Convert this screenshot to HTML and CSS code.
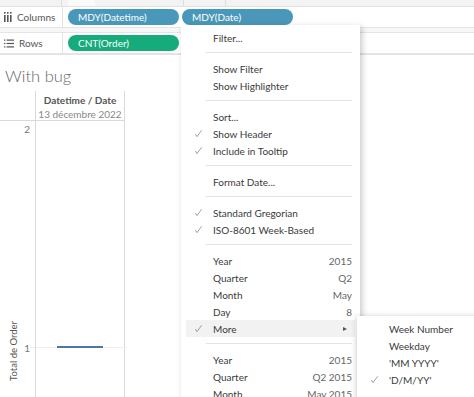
FILE: index.html
```html
<!DOCTYPE html>
<html lang="fr">
<head>
    <meta charset="UTF-8">
    <title>With bug</title>
    <link rel="stylesheet" href="styles.css">
</head>
<body>

    <div class="top-strip">
        <div class="strip-cell strip-a"></div>
        <div class="strip-cell strip-b"><span class="strip-box"></span></div>
        <div class="strip-cell strip-c"></div>
    </div>

    <div class="shelf shelf-cols">
        <div class="shelf-label">
            <svg class="shelf-icon" width="8" height="10" viewBox="0 0 8 10">
                <rect x="0" y="0" width="1.6" height="1.6" fill="#555"/>
                <rect x="3" y="0" width="1.6" height="1.6" fill="#555"/>
                <rect x="6" y="0" width="1.6" height="1.6" fill="#555"/>
                <rect x="0" y="3" width="1.6" height="7" fill="#555"/>
                <rect x="3" y="3" width="1.6" height="7" fill="#555"/>
                <rect x="6" y="3" width="1.6" height="7" fill="#555"/>
            </svg>
            Columns
        </div>
        <div class="shelf-pills">
            <span class="pill pill-dim">MDY(Datetime)</span>
            <span class="pill pill-dim">MDY(Date)</span>
        </div>
    </div>
    <div class="shelf-gap"></div>
    <div class="shelf shelf-rows">
        <div class="shelf-label">
            <svg class="shelf-icon" width="10" height="9" viewBox="0 0 10 9">
                <rect x="0" y="0.5" width="1.4" height="1.2" fill="#555"/>
                <rect x="2.6" y="0.5" width="7.4" height="1.2" fill="#555"/>
                <rect x="0" y="3.9" width="1.4" height="1.2" fill="#555"/>
                <rect x="2.6" y="3.9" width="7.4" height="1.2" fill="#555"/>
                <rect x="0" y="7.3" width="1.4" height="1.2" fill="#555"/>
                <rect x="2.6" y="7.3" width="7.4" height="1.2" fill="#555"/>
            </svg>
            Rows
        </div>
        <div class="shelf-pills">
            <span class="pill pill-measure">CNT(Order)</span>
        </div>
    </div>

    <div class="viz">
        <div class="viz-title">With bug</div>
        <div class="viz-table">
            <div class="corner"></div>
            <div class="col-header">
                <div class="hdr-title">Datetime / Date</div>
                <div class="hdr-value">13 décembre 2022</div>
            </div>
            <div class="axis">
                <span class="tick tick-2">2</span>
                <span class="tick tick-1">1</span>
                <span class="axis-title">Total de Order</span>
            </div>
            <div class="pane">
                <div class="gridline"></div>
                <div class="mark-line"></div>
            </div>
        </div>
    </div>

    <!-- menu contextuel du pill MDY(Date) -->
    <div class="menu">
        <div class="menu-item">Filter...</div>
        <div class="menu-sep"></div>
        <div class="menu-item">Show Filter</div>
        <div class="menu-item">Show Highlighter</div>
        <div class="menu-sep"></div>
        <div class="menu-item">Sort...</div>
        <div class="menu-item checked">Show Header</div>
        <div class="menu-item checked">Include in Tooltip</div>
        <div class="menu-sep"></div>
        <div class="menu-item">Format Date...</div>
        <div class="menu-sep"></div>
        <div class="menu-item checked">Standard Gregorian</div>
        <div class="menu-item checked">ISO-8601 Week-Based</div>
        <div class="menu-sep"></div>
        <div class="menu-item">Year<span class="menu-value">2015</span></div>
        <div class="menu-item">Quarter<span class="menu-value">Q2</span></div>
        <div class="menu-item">Month<span class="menu-value">May</span></div>
        <div class="menu-item">Day<span class="menu-value">8</span></div>
        <div class="menu-item checked active">More<span class="menu-arrow"></span></div>
        <div class="menu-sep"></div>
        <div class="menu-item">Year<span class="menu-value">2015</span></div>
        <div class="menu-item">Quarter<span class="menu-value">Q2 2015</span></div>
        <div class="menu-item">Month<span class="menu-value">May 2015</span></div>
    </div>

    <div class="submenu">
        <div class="menu-item">Week Number</div>
        <div class="menu-item">Weekday</div>
        <div class="menu-item">'MM YYYY'</div>
        <div class="menu-item checked">'D/M/YY'</div>
    </div>

</body>
</html>
```

FILE: styles.css
```css
body {
    margin: 0;
    width: 474px;
    height: 397px;
    overflow: hidden;
    position: relative;
    background: white;
    font-family: Lato, "Open Sans", sans-serif;
    color: #333;
}

/* bande du haut */
.top-strip {
    display: flex;
    height: 6px;
    background: #f3f3f3;
    border-bottom: 1px solid #e2e2e2;
}

.strip-cell {
    border-right: 1px solid #dedede;
}

.strip-a { width: 61px; }
.strip-b { width: 115px; padding-left: 6px; }
.strip-c { width: 41px; }

.strip-box {
    display: block;
    width: 27px;
    height: 6px;
    background: #fafafa;
}

/* shelves */
.shelf {
    display: flex;
    height: 20px;
}

.shelf-cols {
    border-bottom: 1px solid #e4e4e4;
}

.shelf-gap {
    height: 4px;
    background: #f7f7f7;
    border-bottom: 1px solid #e4e4e4;
}

.shelf-rows {
    height: 20px;
    border-bottom: 2px solid #e4e4e4;
}

.shelf-label {
    width: 58px;
    padding-left: 4px;
    border-right: 1px solid #e2e2e2;
    display: flex;
    align-items: center;
    gap: 5px;
    font-size: 10px;
    color: #555;
}

.shelf-icon {
    flex-shrink: 0;
}

.shelf-pills {
    display: flex;
    align-items: center;
    gap: 3px;
    padding-left: 5px;
}

.pill {
    width: 101px;
    height: 16px;
    line-height: 16px;
    padding-left: 10px;
    border-radius: 8px;
    color: white;
    font-size: 10px;
}

.pill-dim { background: #4a98b9; }
.pill-measure { background: #15ab7b; }

/* vue */
.viz {
    padding-top: 10px;
}

.viz-title {
    font-size: 16.5px;
    font-weight: 300;
    color: #666;
    line-height: 22px;
    padding-left: 5px;
}

.viz-table {
    display: grid;
    grid-template-columns: 36px 89px;
    grid-template-rows: 30px 276px;
    margin-top: 4px;
}

.corner {
    border-right: 1px solid #d9d9d9;
    border-bottom: 1px solid #d9d9d9;
}

.col-header {
    border-right: 1px solid #d9d9d9;
    border-bottom: 1px solid #d9d9d9;
    text-align: center;
    padding-top: 2px;
}

.hdr-title {
    font-size: 10px;
    font-weight: bold;
    color: #555;
    line-height: 14px;
}

.hdr-value {
    font-size: 10px;
    color: #888;
    line-height: 14px;
}

.axis {
    position: relative;
    border-right: 1px solid #d9d9d9;
}

.tick {
    position: absolute;
    right: 5px;
    font-size: 10px;
    color: #777;
    line-height: 12px;
}

.tick-2 { top: 2px; }
.tick-1 { top: 221px; }

.axis-title {
    position: absolute;
    left: 8px;
    top: 200px;
    writing-mode: vertical-rl;
    transform: rotate(180deg);
    font-size: 9.5px;
    color: #555;
}

.pane {
    position: relative;
    border-right: 1px solid #d9d9d9;
}

.gridline {
    position: absolute;
    left: -6px;
    right: -3px;
    top: 226px;
    height: 1px;
    background: #eeeeee;
}

.mark-line {
    position: absolute;
    left: 21px;
    width: 46px;
    top: 225px;
    height: 2px;
    background: #4b76a5;
}

/* menus */
.menu {
    position: absolute;
    left: 181px;
    top: 25px;
    width: 179px;
    height: 390px;
    padding-top: 4px;
    box-sizing: border-box;
    background: white;
    box-shadow: 2px 2px 6px rgba(0, 0, 0, 0.22);
}

.submenu {
    position: absolute;
    left: 357px;
    top: 316px;
    width: 130px;
    height: 90px;
    padding-top: 4px;
    box-sizing: border-box;
    background: white;
    box-shadow: 0 1px 6px rgba(0, 0, 0, 0.25);
}

.menu-item {
    display: flex;
    align-items: center;
    justify-content: space-between;
    height: 17px;
    margin: 0 5px;
    padding: 0 3px 0 27px;
    font-size: 10px;
    color: #3a3a3a;
    position: relative;
}

.menu-item.checked::before {
    content: "";
    position: absolute;
    left: 9px;
    top: 5px;
    width: 7px;
    height: 7px;
    background: url("data:image/svg+xml;utf8,<svg xmlns='http://www.w3.org/2000/svg' width='7' height='7' viewBox='0 0 7 7'><polyline points='0.4,4 2,6.6 6.6,0.3' fill='none' stroke='%23888' stroke-width='0.8'/></svg>") no-repeat;
}

.menu-item.active {
    background: #f2f2f2;
}

.menu-value {
    color: #666;
}

.menu-arrow {
    width: 0;
    height: 0;
    margin-right: 5px;
    border-top: 2.5px solid transparent;
    border-bottom: 2.5px solid transparent;
    border-left: 4px solid #555;
}

.menu-sep {
    height: 1px;
    background: #e3e3e3;
    margin: 6px 8px 7px 25px;
}
```
